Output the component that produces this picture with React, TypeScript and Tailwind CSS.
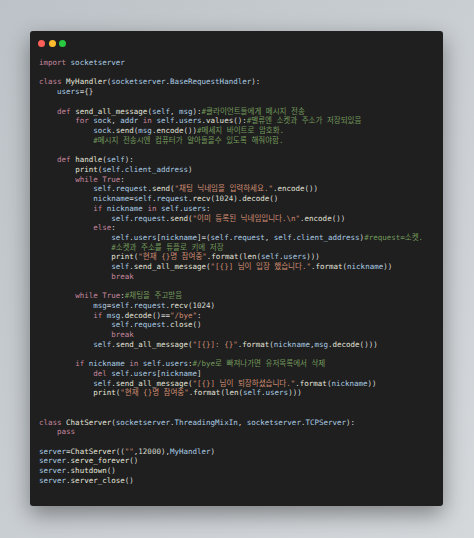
const CODE = `import socketserver

class MyHandler(socketserver.BaseRequestHandler):
    users={}

    def send_all_message(self, msg):#클라이언트들에게 메시지 전송
        for sock, addr in self.users.values():#밸류엔 소켓과 주소가 저장되있음
            sock.send(msg.encode())#메세지 바이트로 암호화.
            #메시지 전송시엔 컴퓨터가 알아들을수 있도록 해줘야함.

    def handle(self):
        print(self.client_address)
        while True:
            self.request.send("채팅 닉네임을 입력하세요.".encode())
            nickname=self.request.recv(1024).decode()
            if nickname in self.users:
                self.request.send("이미 등록된 닉네임입니다.\\n".encode())
            else:
                self.users[nickname]=(self.request, self.client_address)#request=소켓.
                #소켓과 주소를 튜플로 키에 저장
                print("현재 {}명 참여중".format(len(self.users)))
                self.send_all_message("[{}] 님이 입장 했습니다.".format(nickname))
                break

        while True:#채팅을 주고받음
            msg=self.request.recv(1024)
            if msg.decode()=="/bye":
                self.request.close()
                break
            self.send_all_message("[{}]: {}".format(nickname,msg.decode()))

        if nickname in self.users:#/bye로 빠져나가면 유저목록에서 삭제
            del self.users[nickname]
            self.send_all_message("[{}] 님이 퇴장하셨습니다.".format(nickname))
            print("현재 {}명 참여중".format(len(self.users)))


class ChatServer(socketserver.ThreadingMixIn, socketserver.TCPServer):
    pass

server=ChatServer(("",12000),MyHandler)
server.serve_forever()
server.shutdown()
server.server_close()`;

const KEYWORDS = new Set(["import", "class", "def", "for", "in", "while", "if", "else", "break", "del", "pass", "True", "False", "None", "return"]);

type Token = { text: string; cls: string };

function tokenize(line: string): Token[] {
    const out: Token[] = [];
    const re = /(#.*$)|("(?:[^"\\]|\\.)*")|(\b\d+\b)|([A-Za-z_]\w*)|(\s+)|(.)/g;
    let m: RegExpExecArray | null;
    while ((m = re.exec(line))) {
        if (m[1]) out.push({ text: m[1], cls: "text-[#749a5c]" });
        else if (m[2]) out.push({ text: m[2], cls: "text-[#cf8c72]" });
        else if (m[3]) out.push({ text: m[3], cls: "text-[#d6dccf]" });
        else if (m[4]) {
            const word = m[4];
            const next = line[re.lastIndex];
            if (KEYWORDS.has(word)) out.push({ text: word, cls: "text-[#c7879f]" });
            else if (next === "(") out.push({ text: word, cls: "text-[#e4e4da]" });
            else out.push({ text: word, cls: "text-[#accde4]" });
        } else out.push({ text: m[0], cls: "text-[#d8d8d8]" });
    }
    return out;
}

export default function App() {
    const lines = CODE.split("\n");
    return (
        <div className="w-[474px] h-[538px] bg-linear-to-br from-[#bcc2c7] via-[#c9ced2] to-[#d5d8db] pt-[31px] pl-[30px]">
            <div className="w-[413px] h-[475px] bg-[#1f1f1f] rounded-[3px] shadow-[0_8px_22px_rgba(0,0,0,0.4)] pt-[27px] px-[9px] relative">
                <div className="absolute top-[8.5px] left-[8px] flex gap-[3.6px]">
                    <span className="w-[7px] h-[7px] rounded-full bg-[#fe5f57]" />
                    <span className="w-[7px] h-[7px] rounded-full bg-[#febc2e]" />
                    <span className="w-[7px] h-[7px] rounded-full bg-[#28c840]" />
                </div>
                <div
                    className="text-[7.5px] leading-[9.72px] whitespace-pre"
                    style={{ fontFamily: '"DejaVu Sans Mono", "Noto Sans CJK KR", monospace' }}
                >
                    {lines.map((line, i) => (
                        <div key={i} className="h-[9.72px]">
                            {tokenize(line).map((t, j) => (
                                <span key={j} className={t.cls}>{t.text}</span>
                            ))}
                        </div>
                    ))}
                </div>
            </div>
        </div>
    );
}
